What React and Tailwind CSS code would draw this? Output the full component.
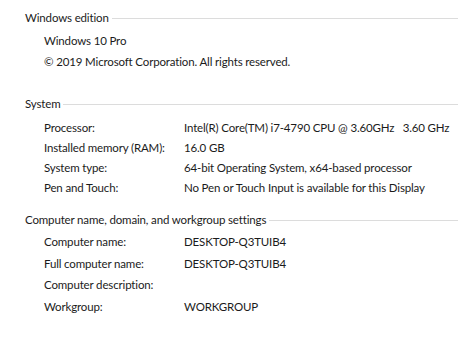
import React from "react";

function Heading({ children, className = "" }) {
  return (
    <div className={`flex items-center h-[20px] pr-[16px] ${className}`}>
      <span className="whitespace-nowrap">{children}</span>
      <div className="flex-1 h-px bg-[#dcdcdc] ml-[3px] mt-[1px]" />
    </div>
  );
}

function Row({ label, value, h = "h-[20px]", className = "" }) {
  return (
    <div className={`flex items-center pl-[19px] ${h} ${className}`}>
      <span className="w-[140px] shrink-0 whitespace-nowrap">{label}</span>
      <span className="whitespace-pre">{value}</span>
    </div>
  );
}

export default function App() {
  return (
    <div
      className="w-[474px] h-[342px] bg-white text-[#1b1b1b] text-[11.5px] tracking-[-0.15px] pl-[25px] overflow-hidden"
      style={{ fontFamily: 'Lato, sans-serif' }}
    >
      <Heading className="mt-[8px]">Windows edition</Heading>
      <div className="pl-[19px] h-[20px] mt-[3px] flex items-center">Windows 10 Pro</div>
      <div className="pl-[19px] h-[21px] flex items-center">© 2019 Microsoft Corporation. All rights reserved.</div>

      <Heading className="mt-[22px]">System</Heading>
      <div className="mt-[4px]">
        <Row label="Processor:" value="Intel(R) Core(TM) i7-4790 CPU @ 3.60GHz   3.60 GHz" />
        <Row label="Installed memory (RAM):" value="16.0 GB" />
        <Row label="System type:" value="64-bit Operating System, x64-based processor" />
        <Row label="Pen and Touch:" value="No Pen or Touch Input is available for this Display" />
      </div>

      <Heading className="mt-[12px]">Computer name, domain, and workgroup settings</Heading>
      <div className="mt-[1px]">
        <Row h="h-[21.5px]" label="Computer name:" value="DESKTOP-Q3TUIB4" />
        <Row h="h-[21.5px]" label="Full computer name:" value="DESKTOP-Q3TUIB4" />
        <Row h="h-[21.5px]" label="Computer description:" value="" />
        <Row h="h-[21.5px]" label="Workgroup:" value="WORKGROUP" />
      </div>
    </div>
  );
}
